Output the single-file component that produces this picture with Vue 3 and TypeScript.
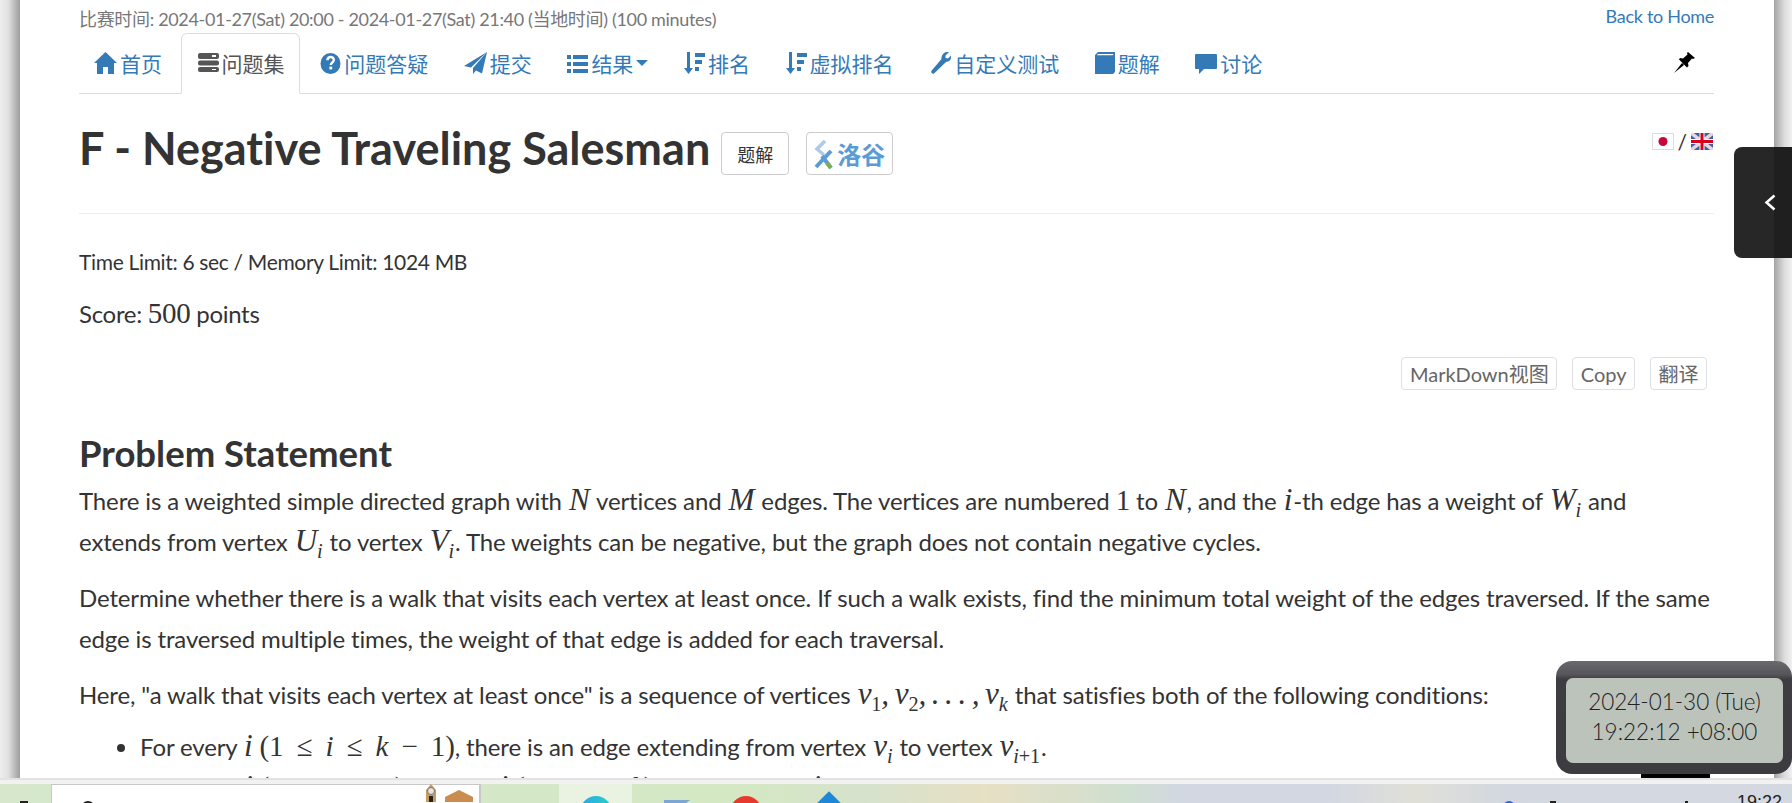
<template>
  <div class="screen">
    <div class="page">
      <div class="gutter gutter-left"></div>
      <div class="sheet">
        <div class="top-row">
          <small class="duration">比赛时间: 2024-01-27(Sat) 20:00 - 2024-01-27(Sat) 21:40 (当地时间) (100 minutes)</small>
          <a class="back-home">Back to Home</a>
        </div>

        <div class="tabs">
          <a v-for="tab in tabs" :key="tab.label" class="tab" :class="{ active: tab.active }">
            <svg class="tab-icon" :width="tab.w" height="22" :viewBox="`0 0 ${tab.w} 22`">
              <path :d="tab.d" fill="currentColor" fill-rule="evenodd" />
              <path v-if="tab.q" d="M7.4 8.2c0-4.4 6.6-4.2 6.4-.2-.1 2.6-3 2.6-3 5" fill="none" stroke="#fff" stroke-width="2.4" />
              <rect v-if="tab.q" x="9.4" y="14.6" width="2.8" height="2.8" fill="#fff" />
            </svg>
            <span class="tab-label">{{ tab.label }}</span>
            <span v-if="tab.caret" class="caret"></span>
          </a>
          <span class="pin">
            <svg width="21" height="21" viewBox="0 0 21 21">
              <path d="M14 0l7 6-2 1-1-.5-4 4.500.500 3-1.500 1.500-3-3-2-2-3-3L6 6l3 .5 4.500-4L13 1z M8 11L0 21l10-8z" fill="#000" />
            </svg>
          </span>
        </div>

        <div class="title-row">
          <h2 class="title">F - Negative Traveling Salesman</h2>
          <a class="title-btn">题解</a>
          <a class="title-btn luogu">
            <svg width="20" height="32" viewBox="0 0 20 32">
              <path d="M11 3L3 11l7 6" fill="none" stroke="#a9cbec" stroke-width="3.500" />
              <path d="M17 13L2 29" fill="none" stroke="#5b9bd5" stroke-width="4" />
              <path d="M8 18l9 12" fill="none" stroke="#5b9bd5" stroke-width="4" />
              <path d="M13 25l4 5" fill="none" stroke="#7cb04f" stroke-width="4" />
            </svg>
            <span>洛谷</span>
          </a>
          <span class="flags">
            <svg class="flag flag-jp" width="22" height="17" viewBox="0 0 22 17">
              <rect x=".5" y=".5" width="21" height="16" fill="#fff" stroke="#ddd" />
              <circle cx="11" cy="8.500" r="4.500" fill="#c8063a" />
            </svg>
            <span class="slash">/</span>
            <svg class="flag" width="22" height="17" viewBox="0 0 22 17">
              <rect width="22" height="17" fill="#3c5fa8" />
              <path d="M0 0l22 17M22 0L0 17" stroke="#e9d5dc" stroke-width="3.500" />
              <path d="M11 0v17M0 8.500h22" stroke="#fff" stroke-width="5" />
              <path d="M11 0v17M0 8.500h22" stroke="#d9001b" stroke-width="3" />
            </svg>
          </span>
        </div>
        <hr class="rule" />

        <p class="limit">Time Limit: 6 sec / Memory Limit: 1024 MB</p>
        <p class="score">Score: <span class="mr">500</span> points</p>

        <div class="tools">
          <a class="tool">MarkDown视图</a>
          <a class="tool">Copy</a>
          <a class="tool">翻译</a>
        </div>

        <h3 class="heading">Problem Statement</h3>
        <p class="para">
          There is a weighted simple directed graph with <i class="m">N</i> vertices and <i class="m">M</i> edges. The vertices are numbered <span class="mr">1</span> to <i class="m">N</i>, and the <i class="m">i</i>-th edge has a weight of <i class="m">W<sub>i</sub></i> and<br />extends from vertex <i class="m">U<sub>i</sub></i> to vertex <i class="m">V<sub>i</sub></i>. The weights can be negative, but the graph does not contain negative cycles.
        </p>
        <p class="para">
          Determine whether there is a walk that visits each vertex at least once. If such a walk exists, find the minimum total weight of the edges traversed. If the same edge is traversed multiple times, the weight of that edge is added for each traversal.
        </p>
        <p class="para">
          Here, "a walk that visits each vertex at least once" is a sequence of vertices <i class="m tight">v<sub class="up">1</sub>, v<sub class="up">2</sub>, . . . , v<sub>k</sub></i> that satisfies both of the following conditions:
        </p>
        <ul class="conds">
          <li>For every <i class="m">i</i> <span class="mr wide">(1 ≤ <i>i</i> ≤ <i>k</i> − 1)</span>, there is an edge extending from vertex <i class="m">v<sub>i</sub></i> to vertex <i class="m">v<sub>i<span class="up">+1</span></sub></i>.</li>
          <li>For every <i class="m">j</i> <span class="mr wide">(1 ≤ <i>j</i> ≤ <i>N</i>)</span>, there is <i class="m">i</i> <span class="mr wide">(1 ≤ <i>i</i> ≤ <i>k</i>)</span> such that <i class="m">v<sub>i</sub></i> <span class="mr">=</span> <i class="m">j</i>.</li>
        </ul>
      </div>
      <div class="gutter gutter-right"></div>
    </div>

    <div class="strip"></div>

    <div class="taskbar">
      <span class="start-mark"></span>
      <div class="search">
        <span class="search-glass"></span>
        <span class="search-art">
          <svg width="60" height="19" viewBox="0 0 60 19">
            <path d="M1 19V7l5-6 5 6v12z" fill="#c99a5e" />
            <circle cx="6" cy="8" r="3.500" fill="#e8e4dc" stroke="#777" />
            <rect x="4" y="13" width="4" height="6" fill="#222" />
            <path d="M20 14l14-7 14 7v5H20z" fill="#c98d4f" />
          </svg>
        </span>
      </div>
      <span class="task-label"></span>
      <span class="task active"><span class="dot dot-edge"></span></span>
      <span class="task"><span class="dot-flag"></span></span>
      <span class="task"><span class="dot dot-red"></span></span>
      <span class="task"><span class="dot-blue"></span></span>
      <span class="tray-blue"></span>
      <span class="tray-dark"></span>
      <span class="tray-dark tray-third"></span>
      <span class="tray-time">19:22</span>
    </div>

    <div class="side-toggle">
      <svg width="12" height="17" viewBox="0 0 12 17">
        <path d="M10.500 1.500L2.500 8.500l8 7" fill="none" stroke="#fff" stroke-width="2.500" />
      </svg>
    </div>

    <div class="clock">
      <div class="clock-screen">
        <div>2024-01-30 (Tue)</div>
        <div>19:22:12 +08:00</div>
      </div>
      <div class="clock-stand"></div>
    </div>
  </div>
</template>

<script setup lang="ts">
interface Tab {
  label: string
  w: number
  d: string
  active?: boolean
  caret?: boolean
  q?: boolean
}

// glyph shapes are hand traced from the screenshot
const sortIcon =
  'M3 0h3v16h3l-4.500 6L0 16h3z M11 1h10v4H11z M11 8h7v4h-7z M11 15h4v4h-4z'

const tabs: Tab[] = [
  { label: '首页', w: 23, d: 'M11.500 0L23 11h-3v11h-6v-7H9v7H3V11H0z' },
  {
    label: '问题集',
    w: 21,
    active: true,
    d: 'M2 1h17a2 2 0 0 1 2 2v2a2 2 0 0 1-2 2H2a2 2 0 0 1-2-2V3a2 2 0 0 1 2-2z M14 3v2h4V3z M2 8.500h17a2 2 0 0 1 2 2v1a2 2 0 0 1-2 2H2a2 2 0 0 1-2-2v-1a2 2 0 0 1 2-2z M2 15h17a2 2 0 0 1 2 2v1a2 2 0 0 1-2 2H2a2 2 0 0 1-2-2v-1a2 2 0 0 1 2-2z M14 17v1h4v-1z'
  },
  {
    label: '问题答疑',
    w: 21,
    q: true,
    d: 'M10.500 1a10 10.500 0 1 0 0 21 10 10.500 0 1 0 0-21z'
  },
  { label: '提交', w: 23, d: 'M23 0L0 14l7 1.500z M23 0L9 16v6l3-3.500 6 3z' },
  {
    label: '结果',
    w: 21,
    caret: true,
    d: 'M0 3h4v4H0z M6 3h15v4H6z M0 10h4v4H0z M6 10h15v4H6z M0 17h4v4H0z M6 17h15v4H6z'
  },
  { label: '排名', w: 21, d: sortIcon },
  { label: '虚拟排名', w: 21, d: sortIcon },
  {
    label: '自定义测试',
    w: 22,
    d: 'M20 0l-3.500 3.500v2.500l2.500.5L22 3.500c.6 3-1 6-5 6.500L5 21.500c-1.500 1-3.500-.8-2.500-2.800L12.500 7C12 3 16 -1 20 0z'
  },
  {
    label: '题解',
    w: 20,
    d: 'M3 0h17v20l-2 2H0V3zM3 2L1.800 3.200H17.500L18.700 2z'
  },
  { label: '讨论', w: 22, d: 'M1 2h20a1 1 0 0 1 1 1v13a1 1 0 0 1-1 1H9l-5 5v-5H1a1 1 0 0 1-1-1V3a1 1 0 0 1 1-1z' }
]
</script>

<style>
html,
body {
  margin: 0;
  overflow: hidden;
  background: #fff;
}
</style>

<style scoped>
.screen {
  position: relative;
  display: flex;
  flex-direction: column;
  width: 1792px;
  height: 803px;
  overflow: hidden;
  font-family: Lato, "Noto Sans CJK SC", sans-serif;
  font-variant-ligatures: none;
  color: #333;
}

.page {
  display: flex;
  height: 778px;
  flex: none;
  overflow: hidden;
}

.gutter {
  flex: none;
}

.gutter-left {
  width: 20px;
  background: linear-gradient(to right, #eeeeee, #e2e2e2 40%, #a0a0a0 97%);
}

.gutter-right {
  width: 18px;
  background: linear-gradient(to right, #a4a4a4, #dedede 60%, #f0f0f0);
}

.sheet {
  flex: 1;
  min-width: 0;
  padding: 6px 60px 0 59px;
  background: #fff;
  overflow: hidden;
}

.top-row {
  display: flex;
  justify-content: space-between;
  height: 27px;
}

.duration {
  font-size: 18px;
  line-height: 26px;
  letter-spacing: -0.33px;
  color: #777;
}

.back-home {
  font-size: 18px;
  line-height: 20px;
  letter-spacing: -0.3px;
  color: #337ab7;
}

.tabs {
  position: relative;
  display: flex;
  gap: 3px;
  height: 61px;
  border-bottom: 1px solid #ddd;
  box-sizing: border-box;
}

.tab {
  display: flex;
  align-items: center;
  height: 61px;
  padding: 0 14.6px 2px 16px;
  box-sizing: border-box;
  border: 1px solid transparent;
  border-radius: 6px 6px 0 0;
  font-size: 21px;
  color: #337ab7;
}

.tab:first-child {
  padding-left: 14px;
}

.tab.active {
  color: #555;
  background: #fff;
  border-color: #ddd;
  border-bottom-color: #fff;
}

.tab-icon {
  flex: none;
  margin-right: 3px;
}

.tab-label {
  white-space: nowrap;
}

.caret {
  margin-left: 3px;
  border-top: 6px solid #337ab7;
  border-left: 6px solid transparent;
  border-right: 6px solid transparent;
}

.pin {
  position: absolute;
  right: 19px;
  top: 19px;
  line-height: 0;
}

.title-row {
  display: flex;
  align-items: flex-start;
  margin-top: 29px;
  height: 50px;
}

.title {
  margin: 0;
  font-size: 45px;
  line-height: 50px;
  font-weight: 700;
  white-space: nowrap;
}

.title-btn {
  display: flex;
  align-items: center;
  justify-content: center;
  box-sizing: border-box;
  width: 68px;
  height: 43px;
  margin-left: 11px;
  margin-top: 9px;
  border: 1px solid #ccc;
  border-radius: 4px;
  font-size: 18px;
  color: #333;
}

.title-btn.luogu {
  width: 87px;
  margin-left: 17px;
  gap: 3px;
  font-size: 24px;
  font-weight: 700;
  color: #5b9bd5;
}

.flags {
  display: flex;
  align-items: center;
  margin-left: auto;
  gap: 4px;
  margin-right: 1px;
  margin-top: 10px;
  font-size: 21px;
}

.slash {
  line-height: 17px;
}

.rule {
  margin: 40px 0 0;
  border: 0;
  border-top: 1px solid #eee;
}

.limit {
  margin: 27px 0 0;
  font-size: 21px;
  line-height: 41px;
  letter-spacing: -0.33px;
}

.score {
  margin: 11px 0 0;
  font-size: 24px;
  line-height: 41px;
  letter-spacing: -0.3px;
}

.tools {
  display: flex;
  justify-content: flex-end;
  gap: 15px;
  margin-top: 23px;
  padding-right: 7px;
}

.tool {
  display: flex;
  align-items: center;
  height: 33px;
  box-sizing: border-box;
  padding: 0 7.5px;
  border: 1px solid #dcdfe6;
  border-radius: 4px;
  font-size: 20px;
  color: #666;
}

.heading {
  margin: 43px 0 0;
  font-size: 36.5px;
  line-height: 40px;
  font-weight: 700;
}

.para {
  margin: 7px 0 15px;
  font-size: 24px;
  line-height: 41px;
  letter-spacing: -0.13px;
}

.para + .para {
  margin-top: 0;
}

.m {
  margin: 0 1px;
  font-family: "Liberation Serif", serif;
  font-style: italic;
  font-size: 1.3em;
  line-height: 0;
}

.mr {
  font-family: "Liberation Serif", serif;
  font-size: 1.21em;
  line-height: 0;
}

.wide {
  word-spacing: 6px;
}

.tight {
  word-spacing: -2px;
}

sub {
  font-size: 0.65em;
  line-height: 0;
}

.up {
  font-style: normal;
}

.conds {
  margin: -4px 0 0;
  padding-left: 61px;
  font-size: 24px;
  line-height: 41px;
  letter-spacing: -0.13px;
}

.strip {
  flex: none;
  height: 6px;
  box-sizing: border-box;
  background: #f2f2f2;
  border-top: 2px solid #e2e2e2;
}

.taskbar {
  position: relative;
  display: flex;
  flex: 1;
  overflow: hidden;
  background: linear-gradient(to right, #d6e7cc 0, #d4e8c4 42%, #d6e2cc 48%, #e6e0c4 55%, #cfdfd0 63%, #d2d7e2 66%, #d2d7e2 74%, #e0e0d8 79%, #d3d8e0 84%, #d4d8e0 100%);
}

.start-mark {
  width: 8px;
  height: 2px;
  margin: 17px 23px 0 20px;
  background: #222;
  flex: none;
}

.search {
  position: relative;
  flex: none;
  width: 430px;
  height: 19px;
  box-sizing: border-box;
  background: #fff;
  border-top: 1px solid #c8c8c8;
  border-left: 1px solid #c8c8c8;
  border-right: 2px solid #c8c8c8;
}

.search-glass {
  position: absolute;
  left: 29px;
  top: 16px;
  width: 10px;
  height: 10px;
  border: 2px solid #222;
  border-radius: 50%;
}

.search-art {
  position: absolute;
  left: 373px;
  top: -2px;
  line-height: 0;
}

.task-label {
  flex: none;
  width: 78px;
}

.task {
  display: flex;
  justify-content: center;
  flex: none;
  width: 73px;
}

.task.active {
  background: #eaf2e2;
}

.dot {
  width: 32px;
  height: 32px;
  margin-top: 12px;
  border-radius: 50%;
}

.dot-edge {
  background: linear-gradient(to right, #2aa6e8, #2cd0c4);
}

.dot-red {
  background: #e8392f;
  margin-left: 9px;
}

.dot-flag {
  width: 0;
  height: 0;
  margin: 16px 0 0 16px;
  border-left: 26px solid #7ca6d6;
  border-bottom: 20px solid transparent;
}

.dot-blue {
  width: 18px;
  height: 18px;
  margin: 11px 0 0 28px;
  background: #1e88d8;
  transform: rotate(45deg);
}

.tray-blue {
  position: absolute;
  left: 1503px;
  top: 17px;
  width: 12px;
  height: 12px;
  border-radius: 50%;
  background: #2a60f0;
}

.tray-dark {
  position: absolute;
  left: 1550px;
  top: 17px;
  width: 6px;
  height: 4px;
  background: #222;
}

.tray-third {
  left: 1685px;
  width: 3px;
}

.tray-time {
  position: absolute;
  left: 1737px;
  top: 7px;
  font-size: 18px;
  line-height: 22px;
  color: #222;
  font-family: "Liberation Sans", sans-serif;
}

.side-toggle {
  position: absolute;
  left: 1734px;
  top: 147px;
  display: flex;
  align-items: center;
  justify-content: flex-end;
  width: 58px;
  height: 111px;
  box-sizing: border-box;
  padding-right: 16px;
  border-radius: 8px 0 0 8px;
  background: linear-gradient(to right, #272727 69%, #1f1f1f 69%);
}

.clock {
  position: absolute;
  left: 1556px;
  top: 661px;
  width: 236px;
  height: 117px;
}

.clock-screen {
  position: relative;
  z-index: 0;
  box-sizing: border-box;
  height: 113px;
  padding: 17px 9px 11px 10px;
  border-radius: 16px;
  background: linear-gradient(to bottom, #6a6a6e, #55555a 12%, #3e3e42 16%, #3c3c40 100%);
  font-size: 22.5px;
  font-weight: 300;
  line-height: 30px;
  text-align: center;
  color: #222;
}

.clock-screen::before {
  content: "";
  position: absolute;
  z-index: -1;
  left: 10px;
  right: 9px;
  top: 17px;
  bottom: 11px;
  border-radius: 7px;
  background: #bcc3bb;
}

.clock-screen div {
  position: relative;
  top: 9px;
}

.clock-stand {
  width: 69px;
  height: 4px;
  margin-left: 85px;
  background: #000;
}
</style>
